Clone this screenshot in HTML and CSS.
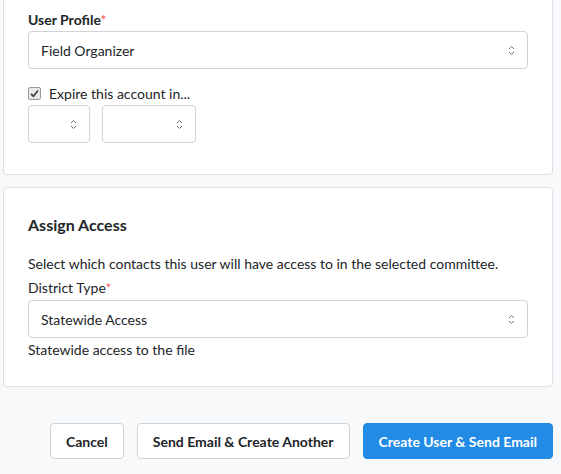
FILE: index.html
```html
<!DOCTYPE html>
<html>
  <head>
    <title>New User</title>
    <link rel="stylesheet" href="styles.css">
  </head>
  <body>
    <div class="page">

      <div class="card card-top">
        <label class="field-label">User Profile<span class="req">*</span></label>
        <div class="select">
          <span>Field Organizer</span>
          <svg class="chev" width="7" height="11" viewBox="0 0 7 11"><path d="M1 4 L3.5 1.5 L6 4 M1 7 L3.5 9.5 L6 7" fill="none" stroke="#6c757d" stroke-width="1"/></svg>
        </div>

        <div class="check-row">
          <span class="checkbox"><svg width="9" height="9" viewBox="0 0 9 9"><path d="M1 4.8 L3.4 7.2 L8 1.5" fill="none" stroke="#444" stroke-width="1.8"/></svg></span>
          <span>Expire this account in...</span>
        </div>
        <div class="expire">
          <div class="select small num">
            <span></span>
            <svg class="chev" width="7" height="11" viewBox="0 0 7 11"><path d="M1 4 L3.5 1.5 L6 4 M1 7 L3.5 9.5 L6 7" fill="none" stroke="#6c757d" stroke-width="1"/></svg>
          </div>
          <div class="select small unit">
            <span></span>
            <svg class="chev" width="7" height="11" viewBox="0 0 7 11"><path d="M1 4 L3.5 1.5 L6 4 M1 7 L3.5 9.5 L6 7" fill="none" stroke="#6c757d" stroke-width="1"/></svg>
          </div>
        </div>
      </div>

      <div class="card">
        <h3>Assign Access</h3>
        <p class="line">Select which contacts this user will have access to in the selected committee.</p>
        <label class="line">District Type<span class="req">*</span></label>
        <div class="select">
          <span>Statewide Access</span>
          <svg class="chev" width="7" height="11" viewBox="0 0 7 11"><path d="M1 4 L3.5 1.5 L6 4 M1 7 L3.5 9.5 L6 7" fill="none" stroke="#6c757d" stroke-width="1"/></svg>
        </div>
        <p class="line">Statewide access to the file</p>
      </div>

      <div class="actions">
        <button class="btn">Cancel</button>
        <button class="btn">Send Email &amp; Create Another</button>
        <button class="btn primary">Create User &amp; Send Email</button>
      </div>

    </div>
  </body>
</html>
```

FILE: styles.css
```css
body {
  margin: 0;
  background: #f8f9fa;
  color: #212529;
  font-family: Lato, "Noto Sans", sans-serif;
  font-size: 14px;
}
.page {
  padding: 0 8px 0 3px;
}

.card {
  background: #fff;
  border: 1px solid #dee2e6;
  border-radius: 4px;
  padding: 25px 24px 24px;
  display: flex;
  flex-direction: column;
}
.card-top {
  border-top: 0;
  border-radius: 0 0 4px 4px;
  padding-top: 9px;
  padding-bottom: 31px;
  margin-bottom: 12px;
}

.field-label {
  font-weight: 700;
  line-height: 21px;
  margin-bottom: 1px;
}
.req { color: #f86a6a; }

.select {
  height: 38px;
  box-sizing: border-box;
  border: 1px solid #ced4da;
  border-radius: 4px;
  padding: 0 12px;
  display: flex;
  align-items: center;
  justify-content: space-between;
  background: #fff;
}
.select .chev { flex: none; }
.select.small { width: 62px; }
.select.small.unit { width: 94px; }

.check-row {
  display: flex;
  align-items: center;
  gap: 8px;
  line-height: 21px;
  margin-top: 14px;
}
.checkbox {
  width: 11px;
  height: 11px;
  border: 1px solid #9a9a9a;
  border-radius: 2px;
  background: #e9e9e9;
  display: flex;
  align-items: center;
  justify-content: center;
}
.expire {
  display: flex;
  gap: 12px;
  margin-top: 1px;
}

h3 {
  margin: 0 0 15px;
  font-size: 16px;
  font-weight: 700;
  line-height: 24px;
}
.line {
  margin: 0;
  line-height: 24px;
}

.actions {
  display: flex;
  justify-content: flex-end;
  gap: 13px;
  margin-top: 36px;
}
.btn {
  font: inherit;
  font-weight: 700;
  height: 36px;
  padding: 0 15px;
  border: 1px solid #ced4da;
  border-radius: 4px;
  background: #fff;
  color: #212529;
}
.btn.primary {
  background: #228be6;
  border-color: #228be6;
  color: #fff;
}
```
